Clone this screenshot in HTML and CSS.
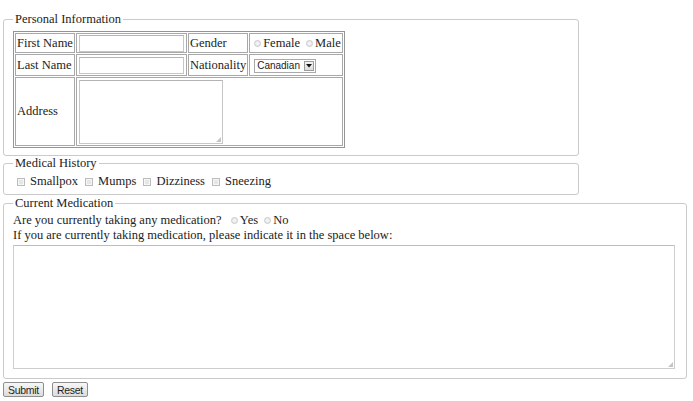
FILE: index.html
```html
<!DOCTYPE html>
<html lang="en">
<head>
<meta charset="utf-8">
<title>Patient Form</title>
<link rel="stylesheet" href="styles.css">
</head>
<body>
<form class="page">
  <fieldset class="group group-personal narrow">
    <legend>Personal Information</legend>
    <table class="info">
      <tr class="r1">
        <td class="c1">First Name</td>
        <td class="c2"><input type="text" class="text"></td>
        <td class="c3">Gender</td>
        <td class="c4"><input type="radio" name="gender" class="radio">Female <input type="radio" name="gender" class="radio">Male</td>
      </tr>
      <tr class="r2">
        <td class="c1">Last Name</td>
        <td class="c2"><input type="text" class="text"></td>
        <td class="c3">Nationality</td>
        <td class="c4"><span class="select"><select class="select-input"><option>Canadian</option></select><span class="arrow"><svg width="6" height="4" viewBox="0 0 6 4"><path d="M0 0H6L3 3.5Z" fill="#111"/></svg></span></span></td>
      </tr>
      <tr class="r3">
        <td class="c1">Address</td>
        <td class="c2" colspan="3"><span class="area-wrap"><textarea class="addr"></textarea><span class="grip"></span></span></td>
      </tr>
    </table>
  </fieldset>

  <fieldset class="group group-history narrow">
    <legend>Medical History</legend>
    <div class="checks"><input type="checkbox" class="check">Smallpox <input type="checkbox" class="check">Mumps <input type="checkbox" class="check">Dizziness <input type="checkbox" class="check">Sneezing</div>
  </fieldset>

  <fieldset class="group group-meds">
    <legend>Current Medication</legend>
    <div class="line">Are you currently taking any medication?&nbsp; <input type="radio" name="meds" class="radio">Yes <input type="radio" name="meds" class="radio">No</div>
    <div class="line">If you are currently taking medication, please indicate it in the space below:</div>
    <div class="area-wrap area-block"><textarea class="meds"></textarea><span class="grip"></span></div>
  </fieldset>

  <div class="actions">
    <button type="submit" class="btn">Submit</button>
    <button type="reset" class="btn">Reset</button>
  </div>
</form>
</body>
</html>
```

FILE: styles.css
```css
html, body {
  margin: 0;
  background: #ffffff;
}

body {
  font-family: "Liberation Serif", "Times New Roman", serif;
  font-size: 12.5px;
  line-height: 15px;
  color: #222222;
}

.page {
  padding: 12px 6px 0 3px;
}

.group {
  margin: 0;
  min-width: 0;
  border: 1px solid #cacaca;
  border-radius: 3px;
}

.group legend {
  padding: 0 2px;
  line-height: 15px;
}

.narrow {
  width: 576px;
  box-sizing: border-box;
}

.group-personal {
  padding: 4px 9px 7px 9px;
}

.group-history {
  padding: 3px 9px 5px 9px;
}

.group-meds {
  margin-top: 1px;
  padding: 2px 11px 9px 9px;
}

/* table */
.info {
  border: 1px solid #959595;
  border-spacing: 1px;
  border-collapse: separate;
}

.info td {
  border: 1px solid #a8a8a8;
  padding: 0 1px;
  white-space: nowrap;
  vertical-align: middle;
}

.info .r1 { height: 20px; }
.info .r2 { height: 22px; }
.info .r3 { height: 69px; }

.info td.c2 {
  padding-right: 2px;
}

.text {
  display: block;
  box-sizing: border-box;
  width: 105px;
  height: 17px;
  margin: 0 0 0 1px;
  padding: 0 2px;
  border: 1px solid #c6c6c6;
  border-top-color: #b4b4b4;
  background: #fff;
}

.area-wrap {
  position: relative;
  display: inline-block;
  vertical-align: top;
}

.area-block {
  display: block;
  margin-top: 2px;
}

.grip {
  position: absolute;
  right: 2px;
  bottom: 2px;
  width: 0;
  height: 0;
  border-left: 5px solid transparent;
  border-bottom: 5px solid #c4c4c4;
}

.addr {
  display: block;
  box-sizing: border-box;
  width: 144px;
  height: 64px;
  margin: 0 0 0 1px;
  border: 1px solid #c6c6c6;
  border-top-color: #b4b4b4;
  padding: 1px;
  resize: none;
}

.radio {
  appearance: none;
  -webkit-appearance: none;
  box-sizing: border-box;
  width: 7px;
  height: 7px;
  margin: 0 2px 0 3px;
  border: 1px solid #c8c8c8;
  border-radius: 50%;
  background: radial-gradient(circle, #f7f7f7 0, #e4e4e4 100%);
  vertical-align: 0;
}

.check {
  appearance: none;
  -webkit-appearance: none;
  box-sizing: border-box;
  width: 8px;
  height: 8px;
  margin: 0 5px 0 4px;
  border: 1px solid #bcbcbc;
  background: #e6e6e6;
  box-shadow: inset 0 0 0 1px #f6f6f6;
  vertical-align: -0.5px;
}

.select {
  display: inline-flex;
  align-items: center;
  box-sizing: border-box;
  height: 14px;
  margin-left: 3px;
  border: 1px solid #a9a9a9;
  background: #fff;
  vertical-align: middle;
}

.select-input {
  appearance: none;
  -webkit-appearance: none;
  border: 0;
  margin: 0;
  padding: 0 0 0 2px;
  width: 48px;
  height: 12px;
  font-family: "Liberation Sans", Arial, sans-serif;
  font-size: 10px;
  line-height: 12px;
  color: #222;
  background: transparent;
}

.arrow {
  display: flex;
  align-items: center;
  justify-content: center;
  box-sizing: border-box;
  width: 10px;
  height: 10px;
  margin: 0 1px 0 1px;
  border: 1px solid #9c9c9c;
  background: linear-gradient(#f4f4f4, #dcdcdc);
}

.checks,
.line {
  line-height: 15px;
}

.meds {
  display: block;
  box-sizing: border-box;
  width: 100%;
  height: 124px;
  margin: 0;
  border: 1px solid #cdcdcd;
  border-top-color: #bdbdbd;
  padding: 2px;
  resize: none;
}

.actions {
  margin-top: 3px;
  display: flex;
  gap: 8px;
}

.btn {
  box-sizing: border-box;
  height: 15px;
  padding: 0 4px;
  margin: 0;
  border: 1px solid #8f8f8f;
  border-radius: 2px;
  background: linear-gradient(#f7f7f7, #dcdcdc);
  font-family: "Liberation Sans", Arial, sans-serif;
  font-size: 10.5px;
  line-height: 12px;
  letter-spacing: -0.3px;
  color: #1e1e1e;
}
```
